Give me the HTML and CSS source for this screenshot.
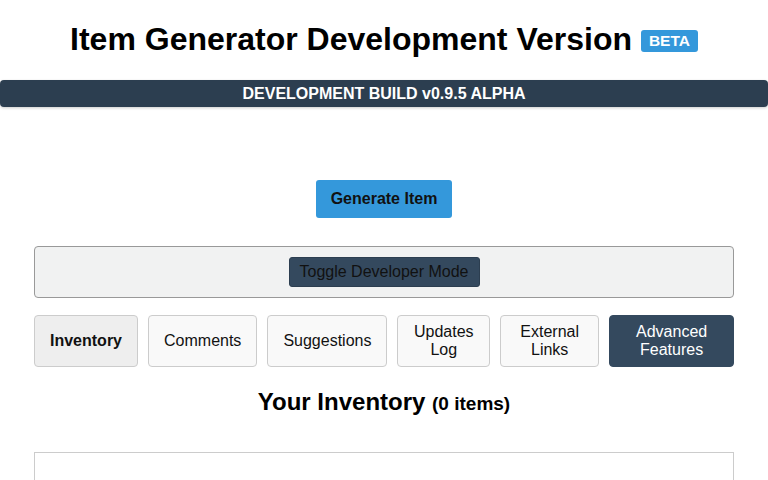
FILE: index.html
```html
<!DOCTYPE html>
<html lang="en">
<head>
<meta charset="utf-8">
<title>Item Generator Development Version</title>
<link rel="stylesheet" href="styles.css">
</head>
<body>
<h1 class="title">Item Generator Development Version <span class="badge">BETA</span></h1>
<div class="dev-bar">DEVELOPMENT BUILD v0.9.5 ALPHA</div>
<main class="container">
  <div class="generate-wrap">
    <button class="btn-generate">Generate Item</button>
  </div>
  <div class="dev-panel">
    <button class="btn-toggle">Toggle Developer Mode</button>
  </div>
  <nav class="tabs">
    <button class="tab tab-active">Inventory</button>
    <button class="tab">Comments</button>
    <button class="tab">Suggestions</button>
    <button class="tab">Updates Log</button>
    <button class="tab">External Links</button>
    <button class="tab tab-dark">Advanced Features</button>
  </nav>
  <h2 class="inv-title">Your Inventory <span class="inv-count">(0 items)</span></h2>
  <div class="inv-box"></div>
</main>
</body>
</html>
```
FILE: styles.css
```css
body {
  margin: 0;
  font-family: "Liberation Sans", Arial, sans-serif;
  color: #000;
  background: #fff;
}

.title {
  font-size: 32px;
  font-weight: bold;
  text-align: center;
  margin: 21.44px 0;
  line-height: 36.8px;
}

.badge {
  display: inline-block;
  vertical-align: 4px;
  background: #3498db;
  color: #fff;
  font-size: 15.5px;
  line-height: 18px;
  padding: 2px 8px;
  border-radius: 3px;
}

.dev-bar {
  background: #2c3e50;
  color: #fff;
  font-weight: bold;
  font-size: 16px;
  line-height: 19px;
  padding: 4px 0;
  text-align: center;
  border-radius: 4px;
  box-shadow: 0 1px 3px rgba(0, 0, 0, 0.2);
}

.container {
  max-width: 700px;
  margin: 0 auto;
}

.generate-wrap {
  text-align: center;
  margin-top: 73px;
}

.btn-generate {
  font-family: inherit;
  font-size: 16px;
  font-weight: bold;
  line-height: 18px;
  background: #3498db;
  color: #111;
  border: none;
  border-radius: 3px;
  padding: 10px 15px;
}

.dev-panel {
  margin-top: 28px;
  background: #f1f2f2;
  border: 1px solid #999;
  border-radius: 4px;
  padding: 10px;
  text-align: center;
}

.btn-toggle {
  font-family: inherit;
  font-size: 16px;
  line-height: 18px;
  background: #34495e;
  color: #111;
  border: 1px solid #2c3e50;
  border-radius: 3px;
  padding: 5px 10px;
}

.tabs {
  display: flex;
  gap: 10px;
  margin-top: 17px;
}

.tab {
  flex: 1 1 auto;
  font-family: inherit;
  font-size: 16px;
  line-height: 18.4px;
  color: #111;
  background: #f9f9f9;
  border: 1px solid #ccc;
  border-radius: 4px;
  padding: 7px 15px;
}

.tab-active {
  background: #eee;
  font-weight: bold;
}

.tab-dark {
  background: #34495e;
  border-color: #34495e;
  color: #fff;
}

.inv-title {
  text-align: center;
  font-size: 24px;
  line-height: 27.6px;
  margin: 21px 0 34px;
}

.inv-count {
  font-size: 19px;
}

.inv-box {
  border: 1px solid #ccc;
  min-height: 120px;
  background: #fff;
}
```
